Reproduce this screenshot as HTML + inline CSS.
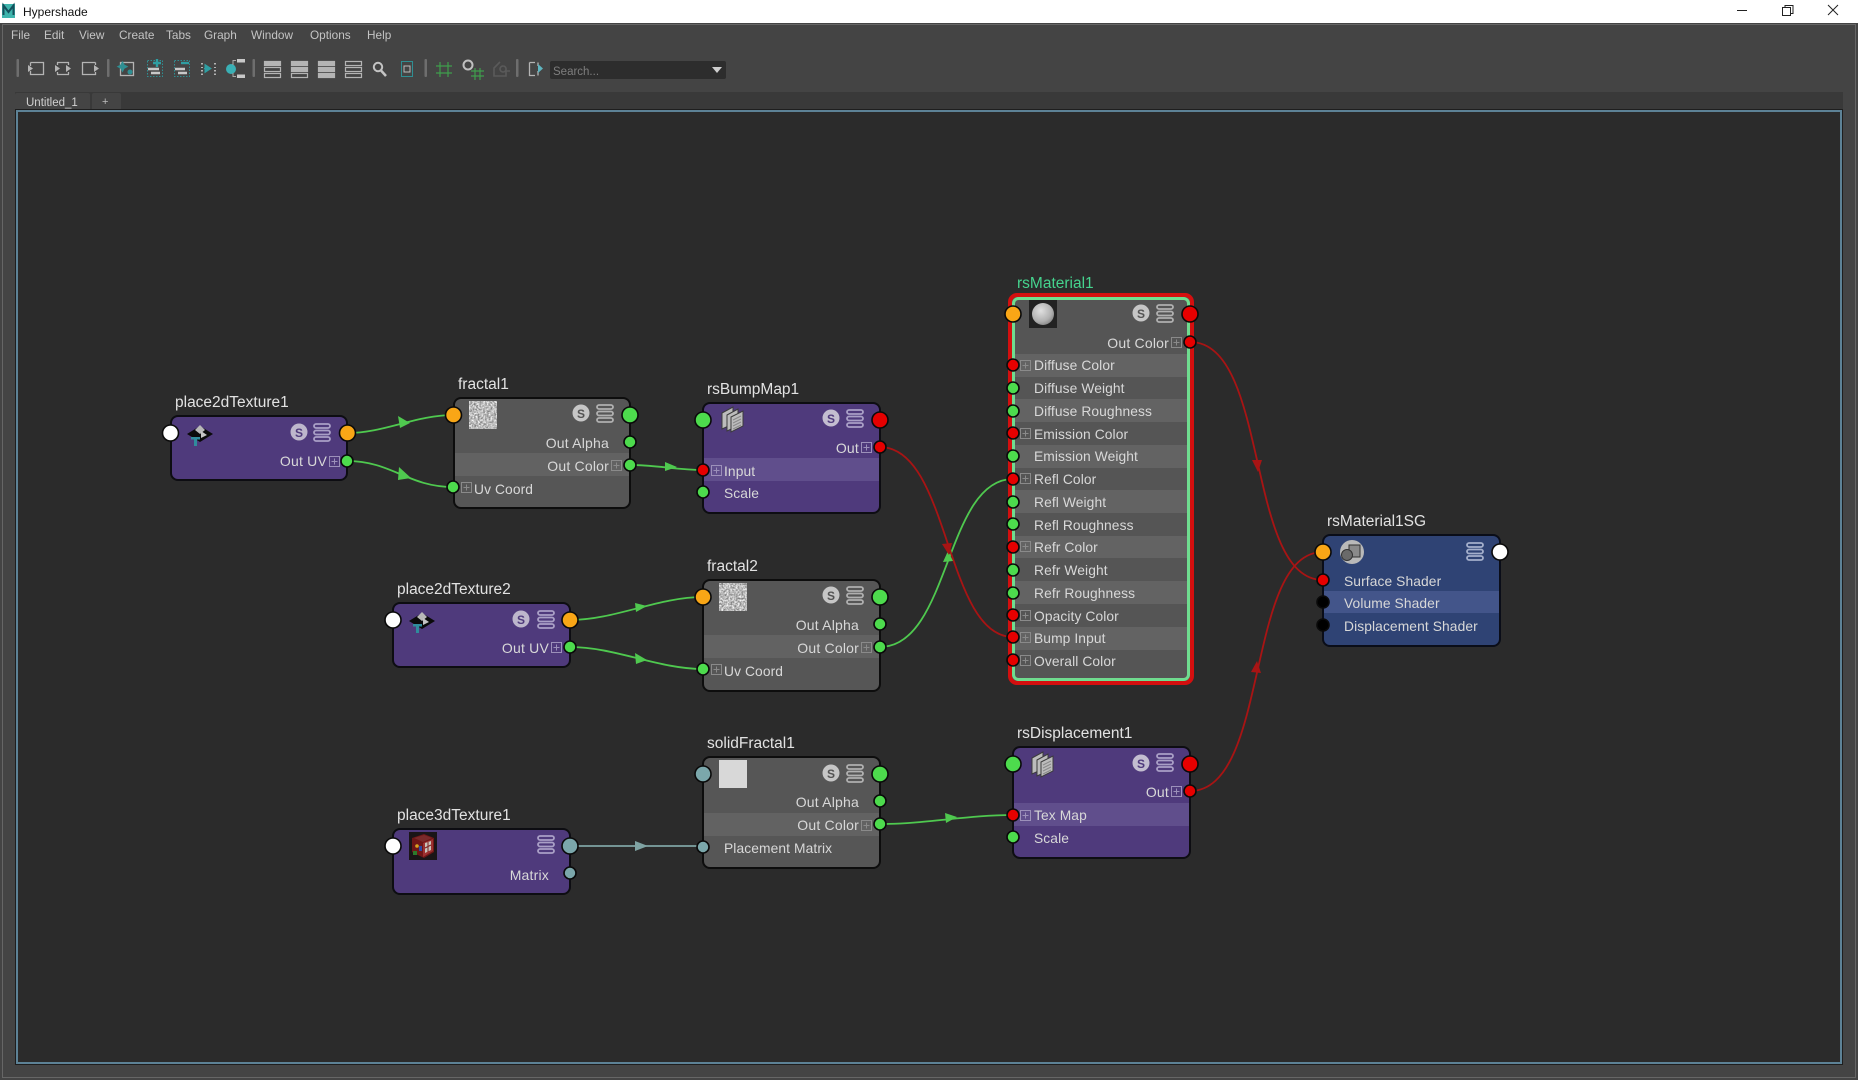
<!DOCTYPE html>
<html><head><meta charset="utf-8"><title>Hypershade</title>
<style>
html,body{margin:0;padding:0;background:#444;width:1858px;height:1080px;overflow:hidden}
svg{position:absolute;left:0;top:0;display:block}
text{font-family:"Liberation Sans",sans-serif}
.m{font-size:11.8px;fill:#c4c4c4}
.t{font-size:15.5px;fill:#e2e2e2}
.l{font-size:13.8px;fill:#d8d8d8;letter-spacing:.1px}
.r{text-anchor:end;font-size:14px;letter-spacing:.2px}
.pu{fill:#4f3a7c;stroke:#0d0d12;stroke-width:2}
.gr{fill:#565656;stroke:#0d0d0d;stroke-width:2}
.bl{fill:#2f4374;stroke:#0a0d18;stroke-width:2}
.g{fill:#4ddb4d;stroke:#0a0a0a;stroke-width:1.6}
.o{fill:#f9a616;stroke:#0a0a0a;stroke-width:1.6}
.e{fill:#e60000;stroke:#0a0a0a;stroke-width:1.6}
.w{fill:#fff;stroke:#0a0a0a;stroke-width:1.6}
.c{fill:#7ba7ab;stroke:#0a0a0a;stroke-width:1.6}
.k{fill:#000;stroke:#0a0a0a;stroke-width:1.6}
.wg{fill:none;stroke:#4fc94f;stroke-width:1.8}
.wr{fill:none;stroke:#a81414;stroke-width:1.8}
.ic{fill:none;stroke:#b4b4b4;stroke-width:1.3}
.ct{fill:none;stroke:#2f8f93;stroke-width:1.4}
</style></head><body>
<svg width="1858" height="1080" viewBox="0 0 1858 1080" xmlns="http://www.w3.org/2000/svg">
<defs>
<filter id="n" x="0" y="0" width="1" height="1" color-interpolation-filters="sRGB"><feTurbulence type="fractalNoise" baseFrequency=".55" numOctaves="2" seed="4"/><feColorMatrix values=".9 0 0 0 .28 .9 0 0 0 .28 .9 0 0 0 .28 0 0 0 0 1"/></filter>
<radialGradient id="sp" cx=".4" cy=".35" r=".7"><stop offset="0" stop-color="#e0e0e0"/><stop offset=".7" stop-color="#b0b0b0"/><stop offset="1" stop-color="#858585"/></radialGradient>
<symbol id="lg" overflow="visible"><g fill="none" stroke="#b0b0b0" stroke-width="1.8"><rect x="1" y="0" width="16" height="4" rx="2"/><rect x="1" y="6.5" width="16" height="4" rx="2"/><rect x="1" y="13" width="16" height="4" rx="2"/></g></symbol>
<symbol id="lp" overflow="visible"><g fill="none" stroke="#a99fc6" stroke-width="1.8"><rect x="1" y="0" width="16" height="4" rx="2"/><rect x="1" y="6.5" width="16" height="4" rx="2"/><rect x="1" y="13" width="16" height="4" rx="2"/></g></symbol>
<symbol id="lb" overflow="visible"><g fill="none" stroke="#a4afcb" stroke-width="1.8"><rect x="1" y="0" width="16" height="4" rx="2"/><rect x="1" y="6.5" width="16" height="4" rx="2"/><rect x="1" y="13" width="16" height="4" rx="2"/></g></symbol>
<symbol id="px" overflow="visible"><g fill="none" stroke="#8a8a8a" stroke-width="1"><rect x=".5" y=".5" width="10" height="10"/><path d="M5.5 2.5V8.500M2.500 5.500H8.500"/></g></symbol>
<symbol id="pxp" overflow="visible"><g fill="none" stroke="#9c90ba" stroke-width="1"><rect x=".5" y=".5" width="10" height="10"/><path d="M5.5 2.5V8.500M2.500 5.500H8.500"/></g></symbol>
<symbol id="bump" overflow="visible"><g fill="#bcbcbc" stroke="#3c3c3c" stroke-width="1"><path d="M0 6 11 0V17L0 22Z"/><path d="M5 8 16 2V19L5 24Z"/><path d="M9 10 21 4V19L9 25Z"/><path d="M11 13 19 9M11 16 19 12M11 19 19 15M11 22 19 18" stroke="#8a8a8a"/></g></symbol>
<symbol id="p2d" overflow="visible"><path d="M12 1 25 9 12 17 -1 9Z" fill="#0a0a0a"/><path d="M12 0 17 5 12 9 7 5Z" fill="#b8b8b8"/><path d="M13 6 19 10 13 13Z" fill="#c4c4c4"/><path d="M3 12H12V14.500H9V21H6V14.500H3Z" fill="#2f8c9c"/></symbol>
</defs>

<!-- window -->
<rect width="1858" height="1080" fill="#444"/>
<rect width="1858" height="23" fill="#fff"/>
<rect x="2" y="4" width="13" height="14" fill="#3fb5ad"/>
<path d="M3.500 15V5.500L8.500 12 13.500 5.500V15" fill="none" stroke="#14505c" stroke-width="2"/>
<text x="23" y="16" style="font-size:12px;fill:#111">Hypershade</text>
<path d="M1737 10.500H1747" stroke="#222" fill="none"/>
<rect x="1782.500" y="7.500" width="8" height="8" fill="none" stroke="#222"/><path d="M1785 7V5.500H1793V13.500H1791" fill="none" stroke="#222"/>
<path d="M1828 5 1838 15M1838 5 1828 15" stroke="#222" fill="none"/>
<path d="M2.500 24.500H1855.500V1077.500H2.500Z" fill="none" stroke="#666"/>

<!-- menu -->
<text class="m" x="11" y="39">File</text>
<text class="m" x="44" y="39">Edit</text>
<text class="m" x="79" y="39">View</text>
<text class="m" x="119" y="39">Create</text>
<text class="m" x="166" y="39">Tabs</text>
<text class="m" x="204" y="39">Graph</text>
<text class="m" x="251" y="39">Window</text>
<text class="m" x="310" y="39">Options</text>
<text class="m" x="367" y="39">Help</text>

<!-- toolbar -->
<g fill="#6e6e6e"><rect x="16.500" y="59" width="2.500" height="18" rx="1"/><rect x="107" y="59" width="2.500" height="18" rx="1"/><rect x="252.500" y="59" width="2.500" height="18" rx="1"/><rect x="424.500" y="59" width="2.500" height="18" rx="1"/><rect x="516" y="59" width="2.500" height="18" rx="1"/></g>
<g class="ic">
<path d="M30.500 62.500H43.500V74.500H30.500V71M30.500 66V62.500"/><path d="M28 65 33 68.500 28 72Z" fill="#b4b4b4" stroke="none"/>
<path d="M57 62.500H69M57 74.500H69M57.500 62.500V65M57.500 72V74.500M68.500 62.500V65M68.500 72V74.500"/><path d="M55 65 60 68.500 55 72Z" fill="#b4b4b4" stroke="none"/><path d="M66 65 71 68.500 66 72Z" fill="#b4b4b4" stroke="none"/>
<path d="M95.500 62.500H82.500V74.500H95.500V72M95.500 65V62.500"/><path d="M94 65 99 68.500 94 72Z" fill="#b4b4b4" stroke="none"/>
<rect x="120.500" y="62.500" width="13" height="13"/>
</g>
<path d="M124 63 126 67 130 69 126 71 124 75 122 71 118 69 122 67Z" fill="#2f8f93" transform="translate(1 -1) scale(.98)"/>
<circle cx="130" cy="72" r="2.500" fill="#2f8f93"/>
<!-- add / remove -->
<rect x="147.500" y="60.500" width="15" height="16" fill="none" stroke="#2f8f93" stroke-dasharray="1.500 1.500"/>
<path d="M148 69H159M151 73H160" stroke="#c8c8c8" stroke-width="2.500"/>
<path d="M157 59V67M153 63H161" stroke="#2f9ea2" stroke-width="2.400"/>
<rect x="174.500" y="60.500" width="15" height="16" fill="none" stroke="#2f8f93" stroke-dasharray="1.500 1.500"/>
<path d="M175 69H185M178 73H187" stroke="#c8c8c8" stroke-width="2.500"/>
<path d="M181 63H189" stroke="#2f9ea2" stroke-width="2.400"/>
<!-- pivot -->
<path d="M202 63V64.500M202 67V68M202 70V71.500M202 73.500V75M215 63V64.500M215 67V68M215 70V71.500M215 73.500V75" stroke="#c0c0c0" stroke-width="1.800"/>
<path d="M204 68.500H210M205 64.500 211 68.500 205 72.500Z" fill="#2f9ea2" stroke="#2f9ea2"/>
<!-- connect -->
<circle cx="231" cy="69" r="5" fill="#3ab0b5"/>
<path d="M236 60.500H233V65M236 76.500H233V73" fill="none" stroke="#aaa"/>
<rect x="237" y="59" width="8" height="3.500" fill="#c8c8c8"/><rect x="237" y="74.500" width="8" height="3.500" fill="#c8c8c8"/>
<!-- layout bars -->
<g stroke="#b4b4b4" stroke-width="1.200">
<rect x="264.500" y="61.500" width="16" height="4" fill="#b4b4b4"/><rect x="264.500" y="67.500" width="16" height="4" fill="none"/><rect x="264.500" y="73.500" width="16" height="4" fill="none"/>
<rect x="291.500" y="61.500" width="16" height="4" fill="#b4b4b4"/><rect x="291.500" y="67.500" width="16" height="4" fill="#b4b4b4"/><rect x="291.500" y="73.500" width="16" height="4" fill="none"/>
<rect x="318.500" y="61.500" width="16" height="4" fill="#b4b4b4"/><rect x="318.500" y="67.500" width="16" height="4" fill="#b4b4b4"/><rect x="318.500" y="73.500" width="16" height="4" fill="#b4b4b4"/>
<rect x="345.500" y="61.500" width="16" height="4" fill="none"/><rect x="345.500" y="67.500" width="16" height="4" fill="none"/><rect x="345.500" y="73.500" width="16" height="4" fill="none"/>
</g>
<circle cx="378" cy="67" r="4.200" fill="none" stroke="#c4c4c4" stroke-width="2"/><path d="M381 70.500 386 76" stroke="#c4c4c4" stroke-width="2.500"/>
<rect x="401.500" y="61.500" width="11" height="15" fill="none" stroke="#2f8f93"/><rect x="404" y="66" width="6" height="6" fill="none" stroke="#bdbdbd"/>
<g stroke="#3f9e4c" stroke-width="1.200" fill="none">
<path d="M440 62V77M448 62V77M436 66H452M436 73H452"/>
<path d="M475 68V80M480 68V80M471 71H484M471 76H484"/>
</g>
<circle cx="468" cy="65" r="4.500" fill="none" stroke="#c0c0c0" stroke-width="2"/>
<path d="M500 62 494 68V76H506V71H510M503 66A3 3 0 1 0 503.100 66" fill="none" stroke="#5a5a5a" stroke-width="1.600"/>
<path d="M529.500 62.500H535M529.500 62.500V75.500H535M538 62.500V66M538 71V75.500" fill="none" stroke="#b4b4b4" stroke-width="1.300"/>
<path d="M538 64 543 68.500 538 73Z" fill="#5fb5c0"/>
<rect x="550" y="61" width="176" height="18" rx="2" fill="#2d2d2d"/>
<text x="553" y="75" style="font-size:11.500px;fill:#7e7e7e">Search...</text>
<path d="M712 67H722L717 73Z" fill="#cfcfcf"/>

<!-- tabs -->
<rect x="15" y="92" width="1828" height="18" fill="#393939"/>
<path d="M15 110V95Q15 93 17 93H88Q90 93 90 95V110Z" fill="#444"/>
<path d="M92 110V95Q92 93 94 93H119Q121 93 121 95V110Z" fill="#444"/>
<text x="26" y="106" style="font-size:11.500px;fill:#d0d0d0">Untitled_1</text>
<text x="102" y="105" style="font-size:11px;fill:#bdbdbd">+</text>

<!-- graph -->
<rect x="15" y="109" width="1828" height="956" fill="#1e1e1e"/>
<rect x="17" y="111" width="1824" height="952" fill="#2b2b2b" stroke="#5d8296" stroke-width="2"/>

<!-- wires -->
<path class="wg" d="M347 433C385 433 415 415 454 415"/>
<path class="wg" d="M347 461C392 461 408 487 453 487"/>
<path class="wg" d="M630 465C655 465 678 470 703 470"/>
<path class="wg" d="M570 620C615 620 658 597 703 597"/>
<path class="wg" d="M570 647C615 647 658 669 703 669"/>
<path class="wg" d="M880 647C950 647 945 479 1013 479"/>
<path class="wg" d="M880 824C925 824 968 815 1013 815"/>
<path d="M570 846H703" fill="none" stroke="#7fa3a3" stroke-width="1.800"/>
<path class="wr" d="M880 447C950 447 945 637 1013 637"/>
<path class="wr" d="M1190 342C1270 342 1245 580 1323 580"/>
<path class="wr" d="M1190 791C1270 791 1245 552 1323 552"/>
<g fill="#4fc94f">
<path d="M398 416 410 423 400 428Z"/>
<path d="M399 467 411 478 398 480Z"/>
<path d="M665 462 677 467 665 471Z"/>
<path d="M635 603 647 606 636 612Z"/>
<path d="M635 653 647 660 636 664Z"/>
<path d="M943 562 948 551 953 561Z"/>
<path d="M945 813 957 817 946 823Z"/>
</g>
<path d="M635 841 648 846 635 851Z" fill="#7fa3a3"/>
<g fill="#a81414">
<path d="M942 544 952 543 949 555Z"/>
<path d="M1252 460 1262 460 1258 472Z"/>
<path d="M1251 672 1261 673 1257 661Z"/>
</g>

<!-- place2dTexture1 -->
<text class="t" x="175" y="407">place2dTexture1</text>
<rect class="pu" x="171" y="416" width="176" height="64" rx="7"/>
<use href="#p2d" x="188" y="425"/>
<circle cx="299" cy="432" r="8.500" fill="#bdb6cc"/><text x="299" y="437" style="font-size:12px;font-weight:bold;fill:#4f3a7c;text-anchor:middle">S</text>
<use href="#lp" x="313" y="424"/>
<text class="l r" x="327" y="466">Out UV</text><use href="#pxp" x="329" y="456"/>
<circle class="w" cx="170.500" cy="433" r="8"/><circle class="o" cx="347.500" cy="433" r="8"/><circle class="g" cx="347" cy="461" r="6"/>

<!-- fractal1 -->
<text class="t" x="458" y="389">fractal1</text>
<rect class="gr" x="454" y="398" width="176" height="110" rx="7"/>
<rect x="455" y="453" width="174" height="23" fill="#626262"/>
<rect x="469" y="401" width="28" height="28" filter="url(#n)"/>
<circle cx="581" cy="413" r="8.500" fill="#c6c6c6"/><text x="581" y="418" style="font-size:12px;font-weight:bold;fill:#545454;text-anchor:middle">S</text>
<use href="#lg" x="596" y="405"/>
<text class="l r" x="609" y="448">Out Alpha</text>
<text class="l r" x="609" y="471">Out Color</text><use href="#px" x="611" y="460"/>
<use href="#px" x="461" y="482"/><text class="l" x="474" y="494">Uv Coord</text>
<circle class="o" cx="453.500" cy="415" r="8"/><circle class="g" cx="630" cy="415" r="8"/><circle class="g" cx="630" cy="442" r="6"/><circle class="g" cx="630" cy="465" r="6"/><circle class="g" cx="453" cy="487" r="6"/>

<!-- rsBumpMap1 -->
<text class="t" x="707" y="394">rsBumpMap1</text>
<rect class="pu" x="703" y="403" width="177" height="110" rx="7"/>
<rect x="704" y="458" width="175" height="23" fill="#604e8c"/>
<use href="#bump" x="722" y="407"/>
<circle cx="831" cy="418" r="8.500" fill="#c3bdd0"/><text x="831" y="423" style="font-size:12px;font-weight:bold;fill:#4f3a7c;text-anchor:middle">S</text>
<use href="#lp" x="846" y="410"/>
<text class="l r" x="859" y="453">Out</text><use href="#pxp" x="861" y="442"/>
<use href="#pxp" x="711" y="465"/><text class="l" x="724" y="476">Input</text>
<text class="l" x="724" y="498">Scale</text>
<circle class="g" cx="703" cy="420" r="8"/><circle class="e" cx="880" cy="420" r="8"/><circle class="e" cx="880" cy="447" r="6"/><circle class="e" cx="703" cy="470" r="6"/><circle class="g" cx="703" cy="492" r="6"/>

<!-- place2dTexture2 -->
<text class="t" x="397" y="594">place2dTexture2</text>
<rect class="pu" x="393" y="603" width="177" height="64" rx="7"/>
<use href="#p2d" x="410" y="612"/>
<circle cx="521" cy="619" r="8.500" fill="#bdb6cc"/><text x="521" y="624" style="font-size:12px;font-weight:bold;fill:#4f3a7c;text-anchor:middle">S</text>
<use href="#lp" x="537" y="611"/>
<text class="l r" x="549" y="653">Out UV</text><use href="#pxp" x="551" y="642"/>
<circle class="w" cx="393" cy="620" r="8"/><circle class="o" cx="570" cy="620" r="8"/><circle class="g" cx="570" cy="647" r="6"/>

<!-- fractal2 -->
<text class="t" x="707" y="571">fractal2</text>
<rect class="gr" x="703" y="580" width="177" height="111" rx="7"/>
<rect x="704" y="635" width="175" height="23" fill="#626262"/>
<rect x="719" y="583" width="28" height="28" filter="url(#n)"/>
<circle cx="831" cy="595" r="8.500" fill="#c6c6c6"/><text x="831" y="600" style="font-size:12px;font-weight:bold;fill:#545454;text-anchor:middle">S</text>
<use href="#lg" x="846" y="587"/>
<text class="l r" x="859" y="630">Out Alpha</text>
<text class="l r" x="859" y="653">Out Color</text><use href="#px" x="861" y="642"/>
<use href="#px" x="711" y="664"/><text class="l" x="724" y="676">Uv Coord</text>
<circle class="o" cx="703" cy="597" r="8"/><circle class="g" cx="880" cy="597" r="8"/><circle class="g" cx="880" cy="624" r="6"/><circle class="g" cx="880" cy="647" r="6"/><circle class="g" cx="703" cy="669" r="6"/>

<!-- solidFractal1 -->
<text class="t" x="707" y="748">solidFractal1</text>
<rect class="gr" x="703" y="757" width="177" height="111" rx="7"/>
<rect x="704" y="813" width="175" height="23" fill="#626262"/>
<rect x="719" y="760" width="28" height="28" fill="#d8d8d8"/>
<circle cx="831" cy="773" r="8.500" fill="#c6c6c6"/><text x="831" y="778" style="font-size:12px;font-weight:bold;fill:#545454;text-anchor:middle">S</text>
<use href="#lg" x="846" y="765"/>
<text class="l r" x="859" y="807">Out Alpha</text>
<text class="l r" x="859" y="830">Out Color</text><use href="#px" x="861" y="820"/>
<text class="l" x="724" y="853">Placement Matrix</text>
<circle class="c" cx="703" cy="774" r="8"/><circle class="g" cx="880" cy="774" r="8"/><circle class="g" cx="880" cy="801" r="6"/><circle class="g" cx="880" cy="824" r="6"/><circle class="c" cx="703" cy="847" r="6"/>

<!-- place3dTexture1 -->
<text class="t" x="397" y="820">place3dTexture1</text>
<rect class="pu" x="393" y="829" width="177" height="65" rx="7"/>
<rect x="409" y="832" width="28" height="28" fill="#1a1517"/>
<path d="M412 838 424 834 434 838 434 852 424 858 412 852Z" fill="#6e1616"/>
<path d="M423 843 433 839V851L423 857Z" fill="#9c3030"/>
<path d="M425 843 431 841V850L425 853Z" fill="#c9c2b8"/>
<path d="M428 842V852M425 848 431 845" stroke="#7c2020" stroke-width="1"/>
<path d="M414 838 424 835 432 838 423 842Z" fill="#7a2a2a"/>
<circle cx="417" cy="846" r="1.800" fill="#d9a520"/><rect x="413" y="851" width="4" height="4" fill="#2c7a2c"/><rect x="419" y="846" width="3" height="5" fill="#2f4aa0"/>
<use href="#lp" x="537" y="836"/>
<text class="l r" x="549" y="880">Matrix</text>
<circle class="w" cx="393" cy="846" r="8"/><circle class="c" cx="570" cy="846" r="8"/><circle class="c" cx="570" cy="873" r="6"/>

<!-- rsDisplacement1 -->
<text class="t" x="1017" y="738">rsDisplacement1</text>
<rect class="pu" x="1013" y="747" width="177" height="111" rx="7"/>
<rect x="1014" y="803" width="175" height="23" fill="#604e8c"/>
<use href="#bump" x="1032" y="752"/>
<circle cx="1141" cy="763" r="8.500" fill="#c3bdd0"/><text x="1141" y="768" style="font-size:12px;font-weight:bold;fill:#4f3a7c;text-anchor:middle">S</text>
<use href="#lp" x="1156" y="754"/>
<text class="l r" x="1169" y="797">Out</text><use href="#pxp" x="1171" y="786"/>
<use href="#pxp" x="1020" y="810"/><text class="l" x="1034" y="820">Tex Map</text>
<text class="l" x="1034" y="843">Scale</text>
<circle class="g" cx="1013" cy="764" r="8"/><circle class="e" cx="1190" cy="764" r="8"/><circle class="e" cx="1190" cy="791" r="6"/><circle class="e" cx="1013" cy="815" r="6"/><circle class="g" cx="1013" cy="837" r="6"/>

<!-- rsMaterial1 -->
<text class="t" x="1017" y="288" style="fill:#45d48e">rsMaterial1</text>
<rect x="1010" y="295" width="182" height="388" rx="7" fill="#555" stroke="#d40f0f" stroke-width="4"/>
<rect x="1013.500" y="298.500" width="175" height="381" rx="5" fill="#555" stroke="#6fdc8f" stroke-width="3"/>
<g fill="#636363">
<rect x="1015" y="354" width="172" height="23"/><rect x="1015" y="399" width="172" height="23"/><rect x="1015" y="445" width="172" height="23"/><rect x="1015" y="490" width="172" height="23"/><rect x="1015" y="536" width="172" height="22"/><rect x="1015" y="581" width="172" height="23"/><rect x="1015" y="627" width="172" height="23"/>
</g>
<rect x="1029" y="300" width="28" height="28" fill="#222"/><circle cx="1043" cy="314" r="11" fill="url(#sp)"/>
<circle cx="1141" cy="313" r="8.500" fill="#c6c6c6"/><text x="1141" y="318" style="font-size:12px;font-weight:bold;fill:#555;text-anchor:middle">S</text>
<use href="#lg" x="1156" y="305"/>
<text class="l r" x="1169" y="348">Out Color</text><use href="#px" x="1171" y="337"/>
<use href="#px" x="1020" y="360"/><text class="l" x="1034" y="370">Diffuse Color</text>
<text class="l" x="1034" y="393">Diffuse Weight</text>
<text class="l" x="1034" y="416">Diffuse Roughness</text>
<use href="#px" x="1020" y="428"/><text class="l" x="1034" y="439">Emission Color</text>
<text class="l" x="1034" y="461">Emission Weight</text>
<use href="#px" x="1020" y="473"/><text class="l" x="1034" y="484">Refl Color</text>
<text class="l" x="1034" y="507">Refl Weight</text>
<text class="l" x="1034" y="530">Refl Roughness</text>
<use href="#px" x="1020" y="541"/><text class="l" x="1034" y="552">Refr Color</text>
<text class="l" x="1034" y="575">Refr Weight</text>
<text class="l" x="1034" y="598">Refr Roughness</text>
<use href="#px" x="1020" y="610"/><text class="l" x="1034" y="621">Opacity Color</text>
<use href="#px" x="1020" y="632"/><text class="l" x="1034" y="643">Bump Input</text>
<use href="#px" x="1020" y="655"/><text class="l" x="1034" y="666">Overall Color</text>
<circle class="o" cx="1013" cy="314" r="8"/><circle class="e" cx="1190" cy="314" r="8"/><circle class="e" cx="1190" cy="342" r="6"/>
<circle class="e" cx="1013" cy="365" r="6"/><circle class="g" cx="1013" cy="388" r="6"/><circle class="g" cx="1013" cy="411" r="6"/><circle class="e" cx="1013" cy="433" r="6"/><circle class="g" cx="1013" cy="456" r="6"/><circle class="e" cx="1013" cy="479" r="6"/><circle class="g" cx="1013" cy="502" r="6"/><circle class="g" cx="1013" cy="524" r="6"/><circle class="e" cx="1013" cy="547" r="6"/><circle class="g" cx="1013" cy="570" r="6"/><circle class="g" cx="1013" cy="593" r="6"/><circle class="e" cx="1013" cy="615" r="6"/><circle class="e" cx="1013" cy="637" r="6"/><circle class="e" cx="1013" cy="660" r="6"/>

<!-- rsMaterial1SG -->
<text class="t" x="1327" y="526">rsMaterial1SG</text>
<rect class="bl" x="1323" y="535" width="177" height="111" rx="7"/>
<rect x="1324" y="591" width="175" height="22" fill="#43558a"/>
<circle cx="1352" cy="552" r="12" fill="#b9b9b9"/>
<rect x="1349" y="545" width="11" height="12" fill="#8a8a8a" stroke="#333"/><circle cx="1347" cy="555" r="5.500" fill="#6a6a6a" stroke="#333"/>
<use href="#lb" x="1466" y="543"/>
<text class="l" x="1344" y="586">Surface Shader</text>
<text class="l" x="1344" y="608">Volume Shader</text>
<text class="l" x="1344" y="631">Displacement Shader</text>
<circle class="o" cx="1323" cy="552" r="8"/><circle class="w" cx="1500" cy="552" r="8"/><circle class="e" cx="1323" cy="580" r="6"/><circle class="k" cx="1323" cy="602" r="6"/><circle class="k" cx="1323" cy="625" r="6"/>
</svg>
</body></html>
